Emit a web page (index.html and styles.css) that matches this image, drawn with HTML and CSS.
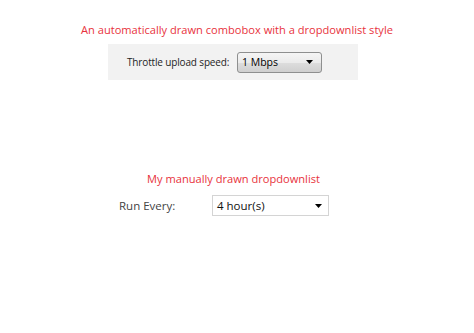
FILE: index.html
```html
<!DOCTYPE html>
<html>
<head>
<meta charset="utf-8">
<link rel="stylesheet" href="styles.css">
</head>
<body>
<div class="page">
  <div class="title title-1">An automatically drawn combobox with a dropdownlist style</div>
  <div class="panel">
    <span class="label">Throttle upload speed:</span>
    <div class="combo">
      <span class="combo-text">1 Mbps</span>
      <svg class="arrow" width="7" height="4" viewBox="0 0 7 4"><path d="M0 0H7L3.5 4Z" fill="#000"/></svg>
    </div>
  </div>
  <div class="title title-2">My manually drawn dropdownlist</div>
  <div class="row">
    <span class="label2">Run Every:</span>
    <div class="ddl">
      <span class="ddl-text">4 hour(s)</span>
      <svg class="arrow" width="7" height="4" viewBox="0 0 7 4"><path d="M0 0H7L3.5 4Z" fill="#000"/></svg>
    </div>
  </div>
</div>
</body>
</html>
```
FILE: styles.css
```css
html, body {
  margin: 0;
  padding: 0;
  background: #ffffff;
}
.page {
  width: 474px;
  height: 333px;
  font-family: "Open Sans", "Noto Sans", sans-serif;
  display: flex;
  flex-direction: column;
}
.title {
  color: #e8323c;
  font-size: 11.1px;
  line-height: 16px;
  text-align: center;
}
.title-1 {
  margin-top: 22px;
}
.panel {
  margin-top: 6px;
  margin-left: 108px;
  width: 250px;
  height: 36px;
  background: #f2f2f2;
  display: flex;
  align-items: center;
  box-sizing: border-box;
  padding-left: 19px;
}
.label {
  font-size: 10px;
  letter-spacing: -0.15px;
  color: #1e1e1e;
  width: 110px;
  flex: none;
  white-space: nowrap;
}
.combo {
  width: 85px;
  height: 21px;
  box-sizing: border-box;
  border: 1px solid #8e8f8f;
  border-radius: 3px;
  background: linear-gradient(#f5f5f5 0%, #ebebeb 50%, #dddddd 51%, #cfcfcf 100%);
  display: flex;
  align-items: center;
  justify-content: space-between;
  padding: 0 8px 0 4px;
}
.combo-text {
  font-size: 10.5px;
  color: #000;
}
.title-2 {
  margin-top: 91px;
  padding-right: 7px;
}
.row {
  margin-top: 8px;
  display: flex;
  align-items: center;
  padding-left: 119px;
}
.label2 {
  font-size: 11.5px;
  color: #444;
  width: 93px;
  flex: none;
}
.ddl {
  width: 117px;
  height: 21px;
  box-sizing: border-box;
  border: 1px solid #d4d4d4;
  background: #fff;
  display: flex;
  align-items: center;
  justify-content: space-between;
  padding: 0 6px 0 4px;
}
.ddl-text {
  font-size: 11.5px;
  color: #111;
}
```
